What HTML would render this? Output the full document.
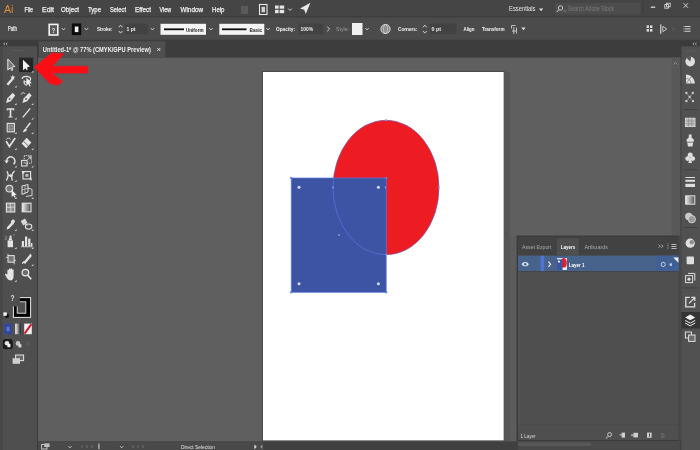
<!DOCTYPE html>
<html><head><meta charset="utf-8"><title>Illustrator</title>
<style>
*{margin:0;padding:0}
html,body{width:700px;height:450px;overflow:hidden;background:#5e5e5e}
svg{display:block;font-family:"Liberation Sans",sans-serif}
</style></head><body>
<svg width="700" height="450" viewBox="0 0 700 450">
<defs>
<filter id="b3" x="-5%" y="-5%" width="110%" height="110%"><feGaussianBlur stdDeviation="0.35"/></filter>
<filter id="b5" x="-20%" y="-20%" width="140%" height="140%"><feGaussianBlur stdDeviation="0.5"/></filter>
<filter id="b7" x="-20%" y="-20%" width="140%" height="140%"><feGaussianBlur stdDeviation="0.7"/></filter>
<clipPath id="rc"><rect x="291.2" y="178" width="95" height="114.3"/></clipPath>
<linearGradient id="gr" x1="0" x2="1" y1="0" y2="0"><stop offset="0" stop-color="#fff"/><stop offset="1" stop-color="#222"/></linearGradient>
<linearGradient id="gr2" x1="0" x2="1" y1="0" y2="0"><stop offset="0" stop-color="#f4f4f4"/><stop offset="1" stop-color="#4a4a4a"/></linearGradient>
<linearGradient id="gr3" x1="0" x2="1" y1="0" y2="0"><stop offset="0" stop-color="#e8e8e8"/><stop offset="1" stop-color="#555"/></linearGradient>
<filter id="gb" x="-20" y="-20" width="740" height="490" filterUnits="userSpaceOnUse"><feGaussianBlur stdDeviation="0.35"/></filter>
</defs>
<g filter="url(#gb)">
<rect x="-20" y="-20" width="740" height="490" fill="#5e5e5e" />
<rect x="-20" y="-20" width="740" height="37" fill="#444444" />
<rect x="-20" y="17" width="740" height="23" fill="#4c4c4c" />
<rect x="-20" y="16.3" width="740" height="1.2" fill="#3d3d3d" />
<rect x="-20" y="39.7" width="740" height="1" fill="#3a3a3a" />
<rect x="38" y="40.2" width="643" height="17.4" fill="#3c3c3c" />
<rect x="38.8" y="41.3" width="126.5" height="16.3" fill="#4f4f4f" />
<rect x="-20" y="40.2" width="57.5" height="430" fill="#4f4f4f" />
<rect x="-20" y="46.2" width="22.6" height="430" fill="#474747" />
<rect x="-20" y="40.2" width="57.5" height="6" fill="#3b3b3b" />
<rect x="37" y="40.2" width="1" height="430" fill="#3a3a3a" />
<rect x="263" y="72" width="240.7" height="368.5" fill="#ffffff" />
<rect x="262.5" y="71.5" width="241.7" height="369.5" fill="none" stroke="#3c3c3c" stroke-width="0.6"/>
<rect x="671.5" y="57.5" width="9.5" height="384" fill="#585858" />
<rect x="38" y="441" width="643" height="29" fill="#484848" />
<rect x="263" y="442" width="255" height="28" fill="#414141" />
<rect x="504" y="72" width="5.5" height="369" fill="#545454" />
<rect x="681" y="40.2" width="39" height="430" fill="#515151" />
<rect x="681" y="40.2" width="39" height="6.2" fill="#3b3b3b" />
<rect x="680.5" y="40.2" width="0.8" height="430" fill="#3a3a3a" />
<g filter="url(#b3)">
<ellipse cx="386" cy="187.5" rx="53" ry="67.3" fill="#ed1c24" stroke="#7a5aa8" stroke-width="0.7"/>
<rect x="291.2" y="178" width="95" height="114.3" fill="#3e53a4"/>
<ellipse cx="386" cy="187.5" rx="53" ry="67.3" fill="none" stroke="#5b7fe6" stroke-width="0.6" clip-path="url(#rc)"/>
<rect x="291.2" y="178" width="95" height="114.3" fill="none" stroke="#5b7be0" stroke-width="0.7"/>
<circle cx="299" cy="187.2" r="1.5" fill="#d3dbfa"/>
<circle cx="378.4" cy="187.2" r="1.5" fill="#d3dbfa"/>
<circle cx="299" cy="283.8" r="1.5" fill="#d3dbfa"/>
<circle cx="378.4" cy="283.8" r="1.5" fill="#d3dbfa"/>
<circle cx="333" cy="187.5" r="0.9" fill="#7f9cf0"/>
<circle cx="386" cy="120.2" r="0.9" fill="#7f9cf0"/>
<circle cx="439" cy="187.5" r="0.9" fill="#7f9cf0"/>
<circle cx="385.5" cy="187.5" r="0.9" fill="#7f9cf0"/>
<circle cx="339" cy="235" r="0.9" fill="#7f9cf0"/>
<circle cx="386.2" cy="254.6" r="0.9" fill="#7f9cf0"/>
<rect x="290.2" y="177" width="2" height="2" fill="#5b7be0"/>
<rect x="385.2" y="177" width="2" height="2" fill="#5b7be0"/>
<rect x="290.2" y="291.3" width="2" height="2" fill="#5b7be0"/>
<rect x="385.2" y="291.3" width="2" height="2" fill="#5b7be0"/>
</g>
<g filter="url(#b3)">
<text x="4" y="13.2" textLength="9.4" lengthAdjust="spacingAndGlyphs" font-size="11" fill="#dc8c3a" font-weight="normal" >Ai</text>
<text x="24.5" y="12.3" textLength="8.5" lengthAdjust="spacingAndGlyphs" font-size="7.6" fill="#f2f2f2" font-weight="normal" stroke="#f2f2f2" stroke-width="0.25">File</text>
<text x="42" y="12.3" textLength="12" lengthAdjust="spacingAndGlyphs" font-size="7.6" fill="#f2f2f2" font-weight="normal" stroke="#f2f2f2" stroke-width="0.25">Edit</text>
<text x="61" y="12.3" textLength="18" lengthAdjust="spacingAndGlyphs" font-size="7.6" fill="#f2f2f2" font-weight="normal" stroke="#f2f2f2" stroke-width="0.25">Object</text>
<text x="88" y="12.3" textLength="13" lengthAdjust="spacingAndGlyphs" font-size="7.6" fill="#f2f2f2" font-weight="normal" stroke="#f2f2f2" stroke-width="0.25">Type</text>
<text x="110" y="12.3" textLength="16" lengthAdjust="spacingAndGlyphs" font-size="7.6" fill="#f2f2f2" font-weight="normal" stroke="#f2f2f2" stroke-width="0.25">Select</text>
<text x="135" y="12.3" textLength="16" lengthAdjust="spacingAndGlyphs" font-size="7.6" fill="#f2f2f2" font-weight="normal" stroke="#f2f2f2" stroke-width="0.25">Effect</text>
<text x="159.5" y="12.3" textLength="11.5" lengthAdjust="spacingAndGlyphs" font-size="7.6" fill="#f2f2f2" font-weight="normal" stroke="#f2f2f2" stroke-width="0.25">View</text>
<text x="180.5" y="12.3" textLength="22.5" lengthAdjust="spacingAndGlyphs" font-size="7.6" fill="#f2f2f2" font-weight="normal" stroke="#f2f2f2" stroke-width="0.25">Window</text>
<text x="212" y="12.3" textLength="12.5" lengthAdjust="spacingAndGlyphs" font-size="7.6" fill="#f2f2f2" font-weight="normal" stroke="#f2f2f2" stroke-width="0.25">Help</text>
<rect x="241" y="6" width="7" height="8" fill="#5a5a5a" />
<rect x="259.5" y="4.5" width="7.5" height="10" fill="none" stroke="#e6e6e6" stroke-width="1.1"/>
<rect x="261.5" y="6.8" width="3.5" height="5.4" fill="#cfcfcf" />
<rect x="275" y="5.5" width="3.6" height="3.2" fill="#e6e6e6" />
<rect x="279.6" y="5.5" width="4.6" height="3.2" fill="#e6e6e6" />
<rect x="275" y="9.8" width="3.6" height="3.4" fill="#e6e6e6" />
<rect x="279.6" y="9.8" width="4.6" height="3.4" fill="#e6e6e6" />
<path d="M288.2 8.51 L290 10.49 L291.8 8.51" fill="none" stroke="#d8d8d8" stroke-width="0.9"/>
<path d="M310.4 2.8 L300 8.6 L304.2 9.8 L305.8 14 Z" fill="#e6e6e6" stroke="none" stroke-width="0" />
<text x="509" y="11.2" textLength="26.5" lengthAdjust="spacingAndGlyphs" font-size="7.4" fill="#e6e6e6" font-weight="normal" >Essentials</text>
<path d="M539 8.6 H543.2 L541.1 11.2 Z" fill="#dcdcdc" stroke="none" stroke-width="0" />
<rect x="555" y="3" width="85.7" height="11.3" fill="#4e4e4e" />
<rect x="642.6" y="0" width="0.8" height="14.2" fill="#3a3a3a" />
<circle cx="560.5" cy="8" r="2.2" fill="none" stroke="#d0d0d0" stroke-width="0.9"/>
<path d="M558.8 9.8 L556.8 12" stroke="#d0d0d0" stroke-width="1" fill="none"/>
<path d="M564.1 10.505 L565 11.495 L565.9 10.505" fill="none" stroke="#bdbdbd" stroke-width="0.6"/>
<text x="568" y="11.4" textLength="46" lengthAdjust="spacingAndGlyphs" font-size="6.4" fill="#7a7a7a" font-weight="normal" >Search Adobe Stock</text>
<rect x="650.8" y="6.6" width="4.4" height="1.2" fill="#e0e0e0" />
<rect x="664.8" y="4.6" width="3.8" height="3.6" fill="none" stroke="#e0e0e0" stroke-width="0.8"/>
<rect x="666.4" y="3.2" width="3.8" height="3.6" fill="none" stroke="#e0e0e0" stroke-width="0.8"/>
<path d="M683.6 3.2 L688 7.8 M688 3.2 L683.6 7.8" stroke="#e0e0e0" stroke-width="0.9" fill="none"/>
</g>
<g filter="url(#b3)">
<text x="7.8" y="31.2" textLength="9.2" lengthAdjust="spacingAndGlyphs" font-size="6.4" fill="#ececec" font-weight="normal" stroke="#ececec" stroke-width="0.2">Path</text>
<rect x="49.2" y="24.4" width="8.6" height="10.6" fill="#5a5a5a" stroke="#f4f4f4" stroke-width="1.6"/>
<text x="51.8" y="32.6" textLength="3.4" lengthAdjust="spacingAndGlyphs" font-size="7" fill="#e8e8e8" font-weight="bold" >?</text>
<path d="M61.8 28.065 L63.5 29.935 L65.2 28.065" fill="none" stroke="#d8d8d8" stroke-width="0.9"/>
<rect x="71.8" y="23.5" width="9.4" height="11.6" fill="#0a0a0a" />
<rect x="74.8" y="26.5" width="3.6" height="5.6" fill="#f2f2f2" />
<path d="M84.8 28.065 L86.5 29.935 L88.2 28.065" fill="none" stroke="#d8d8d8" stroke-width="0.9"/>
<text x="97" y="31.2" textLength="15.5" lengthAdjust="spacingAndGlyphs" font-size="6" fill="#f4f4f4" font-weight="bold" >Stroke:</text>
<path d="M118.8 27.3 L120.6 25.2 L122.4 27.3 M118.8 31 L120.6 33.1 L122.4 31" fill="none" stroke="#dcdcdc" stroke-width="0.9"/>
<rect x="125" y="23.5" width="23" height="11" fill="#424242" />
<text x="126.5" y="31.2" textLength="9" lengthAdjust="spacingAndGlyphs" font-size="6.2" fill="#f0f0f0" font-weight="bold" >1 pt</text>
<path d="M150.8 28.065 L152.5 29.935 L154.2 28.065" fill="none" stroke="#d8d8d8" stroke-width="0.9"/>
<rect x="160.5" y="23.8" width="45.5" height="11" fill="#f4f4f4" />
<rect x="164" y="28.4" width="20" height="1.8" fill="#111" />
<text x="186" y="31.6" textLength="17.5" lengthAdjust="spacingAndGlyphs" font-size="6" fill="#222" font-weight="bold" >Uniform</text>
<path d="M209.3 28.065 L211 29.935 L212.7 28.065" fill="none" stroke="#d8d8d8" stroke-width="0.9"/>
<rect x="219.3" y="23.8" width="45" height="11" fill="#f4f4f4" />
<rect x="222" y="28.4" width="24.5" height="1.8" fill="#111" />
<text x="249.6" y="31.6" textLength="12.5" lengthAdjust="spacingAndGlyphs" font-size="6" fill="#222" font-weight="bold" >Basic</text>
<path d="M266.3 28.065 L268 29.935 L269.7 28.065" fill="none" stroke="#d8d8d8" stroke-width="0.9"/>
<text x="276" y="31.2" textLength="19" lengthAdjust="spacingAndGlyphs" font-size="6" fill="#f4f4f4" font-weight="bold" >Opacity:</text>
<rect x="298.5" y="23.5" width="25" height="11" fill="#424242" />
<text x="300.5" y="31.2" textLength="12.5" lengthAdjust="spacingAndGlyphs" font-size="6.2" fill="#f0f0f0" font-weight="bold" >100%</text>
<path d="M327.2 26.6 L329.6 29 L327.2 31.4" fill="none" stroke="#dcdcdc" stroke-width="0.9"/>
<text x="336" y="31.2" textLength="13" lengthAdjust="spacingAndGlyphs" font-size="6" fill="#9a9a9a" font-weight="normal" >Style:</text>
<rect x="352" y="23" width="10.5" height="12" fill="#f0f0f0" />
<path d="M365.3 28.065 L367 29.935 L368.7 28.065" fill="none" stroke="#d8d8d8" stroke-width="0.9"/>
<circle cx="385.5" cy="29" r="4.6" fill="#8a8a8a" stroke="#d6d6d6" stroke-width="1"/>
<ellipse cx="385.5" cy="29" rx="2" ry="4.4" fill="none" stroke="#d6d6d6" stroke-width="0.7"/>
<text x="398" y="31.2" textLength="19.5" lengthAdjust="spacingAndGlyphs" font-size="6" fill="#f4f4f4" font-weight="bold" >Corners:</text>
<path d="M423 27.3 L424.8 25.2 L426.6 27.3 M423 31 L424.8 33.1 L426.6 31" fill="none" stroke="#dcdcdc" stroke-width="0.9"/>
<rect x="429.5" y="23.5" width="27" height="11" fill="#424242" />
<text x="431.5" y="31.2" textLength="9.5" lengthAdjust="spacingAndGlyphs" font-size="6.2" fill="#f0f0f0" font-weight="bold" >0 pt</text>
<text x="463.5" y="31.2" textLength="11" lengthAdjust="spacingAndGlyphs" font-size="6" fill="#f6f6f6" font-weight="bold" >Align</text>
<text x="482" y="31.2" textLength="22.5" lengthAdjust="spacingAndGlyphs" font-size="6" fill="#f6f6f6" font-weight="bold" >Transform</text>
<path d="M511.5 25.5 h4 M511.5 25.5 v3 M513.8 27 v7 M512 31 h4.5 M516.5 27.5 v6" fill="none" stroke="#dcdcdc" stroke-width="0.8"/>
<path d="M521.4 27.6 H525.6 L523.5 30.2 Z" fill="#e0e0e0" stroke="none" stroke-width="0" />
<rect x="646.6" y="25.4" width="2.4" height="2.6" fill="#dcdcdc" />
<rect x="646.6" y="29.0" width="2.4" height="2.6" fill="#dcdcdc" />
<rect x="650.0" y="25.4" width="2.4" height="2.6" fill="#dcdcdc" />
<rect x="650.0" y="29.0" width="2.4" height="2.6" fill="#dcdcdc" />
<rect x="660.2" y="24.4" width="1.1" height="9.4" fill="#dcdcdc" />
<path d="M662.8 26.3 L666.8 29 L662.8 31.7 Z" fill="none" stroke="#dcdcdc" stroke-width="0.8"/>
<path d="M672.3000000000001 28.285 L673.6 29.715 L674.9 28.285" fill="none" stroke="#777" stroke-width="0.7"/>
<rect x="685" y="26.0" width="5.5" height="1" fill="#cfcfcf" />
<rect x="683.6" y="26.0" width="0.9" height="1" fill="#cfcfcf" />
<rect x="685" y="28.4" width="5.5" height="1" fill="#cfcfcf" />
<rect x="683.6" y="28.4" width="0.9" height="1" fill="#cfcfcf" />
<rect x="685" y="30.8" width="5.5" height="1" fill="#cfcfcf" />
<rect x="683.6" y="30.8" width="0.9" height="1" fill="#cfcfcf" />
</g>
<g filter="url(#b3)">
<text x="42.8" y="52.2" textLength="108" lengthAdjust="spacingAndGlyphs" font-size="6.6" fill="#f0f0f0" font-weight="bold" >Untitled-1* @ 77% (CMYK/GPU Preview)</text>
<path d="M157.3 48 L160.3 51 M160.3 48 L157.3 51" stroke="#e6e6e6" stroke-width="0.9" fill="none"/>
</g>
<g filter="url(#b5)">
<path d="M5 42.6 L3.6 43.8 L5 45 M7.4 42.6 L6 43.8 L7.4 45" fill="none" stroke="#cfcfcf" stroke-width="0.7"/>
<rect x="12.0" y="50.2" width="0.9" height="0.9" fill="#6a6a6a" />
<rect x="13.9" y="50.2" width="0.9" height="0.9" fill="#6a6a6a" />
<rect x="15.8" y="50.2" width="0.9" height="0.9" fill="#6a6a6a" />
<rect x="17.7" y="50.2" width="0.9" height="0.9" fill="#6a6a6a" />
<rect x="19.6" y="50.2" width="0.9" height="0.9" fill="#6a6a6a" />
<rect x="21.5" y="50.2" width="0.9" height="0.9" fill="#6a6a6a" />
<rect x="23.4" y="50.2" width="0.9" height="0.9" fill="#6a6a6a" />
<rect x="19" y="57.6" width="14.2" height="14.4" fill="#262626" />
<path d="M7.8 59 L7.8 70 L10.4 67.8 L11.6 70.4 L12.9 69.8 L11.8 67.2 L14.8 66.4 Z" fill="#777" stroke="#e4e4e4" stroke-width="1" />
<path d="M23 59.8 L23 70.2 L25.6 68.2 L26.6 70.2 L27.8 69.6 L26.9 67.6 L29.9 66.6 Z" fill="#f4f4f4" stroke="none" stroke-width="0" />
<path d="M33.4 70.4 L33.4 72.4 L31.4 72.4 Z" fill="#d8d8d8" stroke="none" stroke-width="0" />
<path d="M7.4 84.8 L12.4 79" fill="none" stroke="#e4e4e4" stroke-width="2.3" />
<path d="M12.8 74.8 l0.7 1.7 l1.8 0.3 l-1.4 1.2 l0.4 1.9 l-1.5 -1 l-1.7 0.8 l0.6 -1.8 l-1.3 -1.4 l1.9 0 Z" fill="#e4e4e4" stroke="none" stroke-width="0" />
<path d="M22.2 79 C22.2 75.6 30.6 75.4 30.6 79 C30.6 82 25.4 82.6 24.2 81 C23.6 83 25 84.6 26.6 85.4" fill="none" stroke="#e4e4e4" stroke-width="1.2" />
<path d="M26.4 77.6 L26.4 85.6 L28.3 83.9 L29.5 86.4 L30.6 85.9 L29.4 83.4 L31.8 83.2 Z" fill="#f0f0f0" stroke="none" stroke-width="0" />
<path d="M16.6 85.4 L16.6 87.4 L14.600000000000001 87.4 Z" fill="#d8d8d8" stroke="none" stroke-width="0" />
<path d="M12.799999999999999 92.8 L15.2 95.4 L10.799999999999999 101.2 L5.999999999999999 103 L7.3999999999999995 98.2 Z" fill="#e4e4e4" stroke="none" stroke-width="0" />
<circle cx="9.6" cy="99" r="0.9" fill="#4f4f4f"/>
<path d="M29.200000000000003 92.8 L31.6 95.4 L27.200000000000003 101.2 L22.400000000000002 103 L23.8 98.2 Z" fill="#e4e4e4" stroke="none" stroke-width="0" />
<circle cx="26.0" cy="99" r="0.9" fill="#4f4f4f"/>
<path d="M21 94.6 C22 92.2 24 92.2 25 94" fill="none" stroke="#e4e4e4" stroke-width="0.9" />
<path d="M16.6 103 L16.6 105 L14.600000000000001 105 Z" fill="#d8d8d8" stroke="none" stroke-width="0" />
<path d="M33.4 103 L33.4 105 L31.4 105 Z" fill="#d8d8d8" stroke="none" stroke-width="0" />
<path d="M6.8 108.2 H14.2 V110.6 H13.2 V109.7 H11.3 V116.4 H12.5 V117.6 H8.5 V116.4 H9.7 V109.7 H7.8 V110.6 H6.8 Z" fill="#e4e4e4" stroke="none" stroke-width="0" />
<path d="M22.8 117.4 L30.2 108.4" fill="none" stroke="#e4e4e4" stroke-width="1.3" />
<path d="M16.6 117.6 L16.6 119.6 L14.600000000000001 119.6 Z" fill="#d8d8d8" stroke="none" stroke-width="0" />
<path d="M33.4 117.6 L33.4 119.6 L31.4 119.6 Z" fill="#d8d8d8" stroke="none" stroke-width="0" />
<rect x="7.2" y="123.4" width="7.2" height="8.4" fill="#6a6a6a" stroke="#e4e4e4" stroke-width="1.1"/>
<path d="M9.6 123.4 V131.8 M12 123.4 V131.8 M7.2 126.2 H14.4 M7.2 129 H14.4" fill="none" stroke="#bcbcbc" stroke-width="0.5" />
<path d="M30.4 122.8 L26 128.4" fill="none" stroke="#e4e4e4" stroke-width="1.5" />
<path d="M25.6 128.2 C24.4 128.8 23.6 130.6 22.6 132.2 C24.6 132.2 26.6 131.4 27 129.6 Z" fill="#e4e4e4" stroke="none" stroke-width="0" />
<path d="M16.6 132 L16.6 134 L14.600000000000001 134 Z" fill="#d8d8d8" stroke="none" stroke-width="0" />
<path d="M33.4 132 L33.4 134 L31.4 134 Z" fill="#d8d8d8" stroke="none" stroke-width="0" />
<path d="M6.2 141.2 L9.4 146.4 L15.2 138" fill="none" stroke="#e4e4e4" stroke-width="1.7" />
<path d="M6.2 139.6 C7.4 137.6 10 137.8 10.6 139.6" fill="none" stroke="#e4e4e4" stroke-width="0.9" />
<path d="M26.6 137.8 L31.4 142.4 L26.2 148.2 L21.6 143.6 Z" fill="#e4e4e4" stroke="none" stroke-width="0" />
<path d="M23.6 141.4 L28.4 146" fill="none" stroke="#555" stroke-width="0.8" />
<path d="M16.6 148 L16.6 150 L14.600000000000001 150 Z" fill="#d8d8d8" stroke="none" stroke-width="0" />
<path d="M33.4 148 L33.4 150 L31.4 150 Z" fill="#d8d8d8" stroke="none" stroke-width="0" />
<path d="M6.6 161.6 A4.2 4.3 0 1 1 13.6 164.3" fill="none" stroke="#e4e4e4" stroke-width="1.5" />
<path d="M4.4 160.4 L8.8 160.4 L6.6 163.6 Z" fill="#e4e4e4" stroke="none" stroke-width="0" />
<rect x="21.6" y="160.4" width="5.4" height="5.6" fill="none" stroke="#e4e4e4" stroke-width="1"/>
<rect x="24.2" y="155.6" width="7.2" height="7.6" fill="none" stroke="#e4e4e4" stroke-width="0.9" stroke-dasharray="1.2 0.8"/>
<path d="M27.4 160 L30.4 157 M28.2 156.8 H30.6 V159.2" fill="none" stroke="#e4e4e4" stroke-width="0.8" />
<path d="M16.6 165.6 L16.6 167.6 L14.600000000000001 167.6 Z" fill="#d8d8d8" stroke="none" stroke-width="0" />
<path d="M33.4 165.6 L33.4 167.6 L31.4 167.6 Z" fill="#d8d8d8" stroke="none" stroke-width="0" />
<path d="M6.4 180.4 C8.6 176 8.6 174.6 7 171.2 M14.6 171 C11.2 173.6 11 176.4 12.4 180.6" fill="none" stroke="#e4e4e4" stroke-width="1.3" />
<path d="M8.4 175.6 H12.6" fill="none" stroke="#e4e4e4" stroke-width="1" />
<circle cx="10.4" cy="175.6" r="1.3" fill="#e4e4e4"/>
<rect x="23" y="171.6" width="7.6" height="7.4" fill="none" stroke="#e4e4e4" stroke-width="1.1"/>
<path d="M21.6 170.4 L25 173 L22.2 173.8 Z M31.8 181 L28.8 178 L31.4 177.6 Z" fill="#e4e4e4" stroke="none" stroke-width="0" />
<rect x="25.4" y="174" width="3" height="2.8" fill="#bdbdbd" />
<path d="M16.6 180 L16.6 182 L14.600000000000001 182 Z" fill="#d8d8d8" stroke="none" stroke-width="0" />
<circle cx="9.4" cy="188.6" r="3.4" fill="#777" stroke="#e4e4e4" stroke-width="1.1"/>
<path d="M11.6 190 L11.6 197 L13.4 195.4 L14.6 197.8 L15.7 197.2 L14.5 194.9 L16.6 194.7 Z" fill="#f2f2f2" stroke="none" stroke-width="0" />
<path d="M22 186 L28 184.6 L28 192 L22 194.4 Z" fill="none" stroke="#e4e4e4" stroke-width="1" />
<path d="M28 188 L32 189.4 L32 195.6 L26 196.4" fill="none" stroke="#e4e4e4" stroke-width="0.9" />
<path d="M22 190 L28 188.2 M25 185.4 V193.2" fill="none" stroke="#e4e4e4" stroke-width="0.6" />
<path d="M16.6 197 L16.6 199 L14.600000000000001 199 Z" fill="#d8d8d8" stroke="none" stroke-width="0" />
<path d="M33.4 197 L33.4 199 L31.4 199 Z" fill="#d8d8d8" stroke="none" stroke-width="0" />
<rect x="6.4" y="203.2" width="8.4" height="8.8" fill="#8b8b8b" stroke="#e4e4e4" stroke-width="1.1"/>
<path d="M6.4 207 C9 208.4 12 206 14.8 207.4 M10.4 203.2 C9.4 206 11.8 209 10.6 212" fill="none" stroke="#f0f0f0" stroke-width="0.7" />
<rect x="22.2" y="203.2" width="8.8" height="8.6" fill="url(#gr2)" stroke="#e4e4e4" stroke-width="1.1"/>
<path d="M6.6 229.4 L7.2 227 L11.6 222.2 L13.4 224 L9 228.8 Z" fill="#e4e4e4" stroke="none" stroke-width="0" />
<path d="M11.4 220.8 C12.6 218.4 15.4 219.4 14.8 221.8 L13.2 224.4 L10.8 222.2 Z" fill="#e4e4e4" stroke="none" stroke-width="0" />
<rect x="21.6" y="219.6" width="5" height="5" fill="#d8d8d8" transform="rotate(-30 24 222)"/>
<ellipse cx="28.6" cy="226.6" rx="3.2" ry="2.6" fill="none" stroke="#e4e4e4" stroke-width="1.1"/>
<path d="M25.4 224 L27.4 225.4" fill="none" stroke="#e4e4e4" stroke-width="0.8" />
<path d="M16.6 229 L16.6 231 L14.600000000000001 231 Z" fill="#d8d8d8" stroke="none" stroke-width="0" />
<path d="M33.4 229 L33.4 231 L31.4 231 Z" fill="#d8d8d8" stroke="none" stroke-width="0" />
<path d="M7.6 240.4 H13 V247.2 H7.6 Z" fill="#e4e4e4" stroke="none" stroke-width="0" />
<path d="M8.6 240.2 L9.4 237.6 H11.4 L12.2 240.2 Z" fill="#e4e4e4" stroke="none" stroke-width="0" />
<rect x="9.6" y="235.6" width="2" height="2" fill="#e4e4e4" />
<path d="M5.6 236.2 L6.8 237.4 M5 239 H6.6 M13.4 235.4 L14.4 234.4" fill="none" stroke="#e4e4e4" stroke-width="0.7" />
<rect x="21.8" y="241" width="2.2" height="5.4" fill="#e4e4e4" />
<rect x="25" y="236.6" width="2.2" height="9.8" fill="#e4e4e4" />
<rect x="28.2" y="238.6" width="2.2" height="7.8" fill="#e4e4e4" />
<rect x="31" y="243" width="1.4" height="3.4" fill="#e4e4e4" />
<rect x="21" y="246.4" width="11.6" height="0.8" fill="#e4e4e4" />
<path d="M16.6 247 L16.6 249 L14.600000000000001 249 Z" fill="#d8d8d8" stroke="none" stroke-width="0" />
<path d="M33.4 247 L33.4 249 L31.4 249 Z" fill="#d8d8d8" stroke="none" stroke-width="0" />
<rect x="8" y="255.6" width="6.2" height="6.6" fill="#777" stroke="#e4e4e4" stroke-width="1"/>
<path d="M6 257.4 H8 M8 253.8 V255.6 M14.2 262.2 V264.4 M14.2 260.4 H16" fill="none" stroke="#e4e4e4" stroke-width="0.8" />
<path d="M30.6 253.4 L23.4 262.6 L25 264 L31.8 256 Z" fill="#e4e4e4" stroke="none" stroke-width="0" />
<path d="M22.2 263.6 L24.6 261.2" fill="none" stroke="#e4e4e4" stroke-width="1.4" />
<path d="M33.4 264 L33.4 266 L31.4 266 Z" fill="#d8d8d8" stroke="none" stroke-width="0" />
<path d="M7.4 274.4 V270.6 C7.4 269.6 8.8 269.6 8.8 270.6 V269.4 C8.8 268.2 10.4 268.2 10.4 269.4 V269 C10.4 267.9 12 267.9 12 269 V270 C12 269 13.6 269 13.6 270 V276 C13.6 279 12.4 280.4 10.4 280.4 C8.4 280.4 7.6 279.4 6.6 277.6 L5.2 275 C4.8 274 6 273.4 6.6 274.2 Z" fill="#e4e4e4" stroke="none" stroke-width="0" />
<circle cx="25.4" cy="272.6" r="3.3" fill="#6c6c6c" stroke="#e4e4e4" stroke-width="1.3"/>
<path d="M27.8 275.2 L31.2 279.2" fill="none" stroke="#e4e4e4" stroke-width="1.7" />
<path d="M16.6 280 L16.6 282 L14.600000000000001 282 Z" fill="#d8d8d8" stroke="none" stroke-width="0" />
<text x="10.4" y="300.6" textLength="4" lengthAdjust="spacingAndGlyphs" font-size="9.5" fill="#dcdcdc" font-weight="bold" >?</text>
<path d="M24.4 292.6 C26.6 290 29.4 290.6 30 293.6" fill="none" stroke="#5c5c5c" stroke-width="0.9" />
<rect x="13.4" y="297.6" width="17.2" height="19.8" fill="#050505" stroke="#e8e8e8" stroke-width="1"/>
<rect x="17.2" y="301.8" width="8.6" height="11.4" fill="#4f4f4f" stroke="#e0e0e0" stroke-width="0.9"/>
<rect x="4.4" y="290.8" width="15.4" height="15.6" fill="#4f4f4f" />
<text x="10.4" y="300.6" textLength="4" lengthAdjust="spacingAndGlyphs" font-size="9.5" fill="#dcdcdc" font-weight="bold" >?</text>
<rect x="5.2" y="314.2" width="3.6" height="3.6" fill="#111" />
<rect x="3.4" y="312.4" width="3.4" height="3.4" fill="#f4f4f4" />
<rect x="4.6" y="323.6" width="7" height="10.6" fill="#2f47a6" />
<rect x="6.6" y="326.8" width="3" height="4.4" fill="#5b74cf" />
<rect x="15.2" y="323.6" width="5.6" height="10.6" fill="url(#gr)" />
<rect x="24.2" y="323.6" width="7.6" height="10.6" fill="#f2f2f2" />
<path d="M24.6 333.6 L31.4 324.2" fill="none" stroke="#d8152a" stroke-width="2" />
<rect x="2.8" y="339" width="10" height="10.2" fill="#1d1d1d" rx="2.6"/>
<circle cx="7" cy="343.2" r="2.3" fill="#e4e4e4"/>
<rect x="7.4" y="344" width="3" height="3.2" fill="#f4f4f4" />
<circle cx="18" cy="343.4" r="2.3" fill="#c4c4c4"/>
<rect x="18.4" y="344.2" width="3" height="3.2" fill="#d8d8d8" />
<rect x="25.6" y="341.6" width="4" height="4.6" fill="#595959" />
<rect x="15.6" y="355" width="8" height="5.6" fill="#6a6a6a" stroke="#e4e4e4" stroke-width="1"/>
<rect x="12.6" y="358.2" width="7.4" height="5.6" fill="#cfcfcf" />
</g>
<rect x="510" y="236" width="7.4" height="205" fill="#5c5c5c" />
<rect x="516.6" y="235.6" width="163" height="205.4" fill="#3a3a3a" />
<rect x="518" y="237" width="160.8" height="203" fill="#4f4f4f" />
<rect x="518" y="442.4" width="73" height="3.6" fill="#585858" />
<rect x="591" y="442.4" width="88" height="3.6" fill="#4b4b4b" />
<rect x="518.6" y="272" width="0.6" height="153" fill="#5a5a5a" />
<rect x="518" y="424.6" width="160.8" height="0.6" fill="#4a4a4a" />
<rect x="518" y="237" width="160.8" height="18.6" fill="#434343" />
<rect x="557" y="238.4" width="21.8" height="17.4" fill="#4f4f4f" />
<rect x="518" y="255.7" width="160.8" height="15.6" fill="#46638c" />
<rect x="540.6" y="255.7" width="3.6" height="15.6" fill="#4f73cf" />
<rect x="656.5" y="255.7" width="22.3" height="15.6" fill="#415f92" />
<rect x="518" y="271.3" width="160.8" height="0.7" fill="#3f3f3f" />
<g filter="url(#b3)">
<text x="522" y="248.8" textLength="29.5" lengthAdjust="spacingAndGlyphs" font-size="6.2" fill="#a8a8a8" font-weight="normal" >Asset Export</text>
<text x="560.8" y="248.8" textLength="14.4" lengthAdjust="spacingAndGlyphs" font-size="6.2" fill="#ffffff" font-weight="bold" >Layers</text>
<text x="584.4" y="248.8" textLength="23.6" lengthAdjust="spacingAndGlyphs" font-size="6.2" fill="#a8a8a8" font-weight="normal" >Artboards</text>
<path d="M658.6 244.6 L660.2 246.2 L658.6 247.8 M661.4 244.6 L663 246.2 L661.4 247.8" fill="none" stroke="#cfcfcf" stroke-width="0.7"/>
<rect x="667.6" y="243.2" width="0.7" height="6" fill="#8a8a8a" />
<rect x="671.4" y="244" width="5" height="0.9" fill="#c8c8c8" />
<rect x="671.4" y="246" width="5" height="0.9" fill="#c8c8c8" />
<rect x="671.4" y="248" width="5" height="0.9" fill="#c8c8c8" />
<path d="M521.6 264.2 C523.4 261.4 527 261.4 528.8 264.2 C527 267 523.4 267 521.6 264.2 Z" fill="#e6ecf6"/>
<circle cx="525.2" cy="264.2" r="1.3" fill="#46638c"/>
<path d="M548.4 261.6 L550.6 264.2 L548.4 266.8" fill="none" stroke="#f0f0f0" stroke-width="1.1"/>
<rect x="557" y="258" width="10" height="12" fill="#dfe3f2" />
<ellipse cx="563.8" cy="263" rx="3" ry="5" fill="#ed1c24"/>
<rect x="557" y="259.4" width="5.6" height="10.6" fill="#3e53a4" />
<circle cx="559" cy="261.6" r="1.1" fill="#fff"/><circle cx="563.9" cy="268.6" r="1.1" fill="#fff"/>
<text x="568.8" y="266.6" textLength="15.6" lengthAdjust="spacingAndGlyphs" font-size="6.2" fill="#ffffff" font-weight="bold" >Layer 1</text>
<circle cx="663.2" cy="264.4" r="2.1" fill="none" stroke="#dfe6f2" stroke-width="0.8"/>
<rect x="669.6" y="263.4" width="2.4" height="2.4" fill="#bcd0ff" />
<path d="M673.2 257.4 L678.4 257.4 L678.4 262.8 Z" fill="#f4f4f4"/>
<text x="520.6" y="438" textLength="15" lengthAdjust="spacingAndGlyphs" font-size="5.8" fill="#d8d8d8" font-weight="normal" >1 Layer</text>
<circle cx="609.6" cy="434.6" r="2" fill="none" stroke="#d6d6d6" stroke-width="0.9"/><path d="M608 436.4 L606 438.6" stroke="#d6d6d6" stroke-width="1" fill="none"/>
<rect x="621.6" y="432.6" width="3.4" height="5" fill="#cfcfcf" />
<rect x="619.6" y="434.4" width="2" height="1" fill="#cfcfcf" />
<rect x="633.4" y="432.8" width="4.6" height="4.6" fill="#cfcfcf" />
<rect x="631" y="434.6" width="2.4" height="1.2" fill="#cfcfcf" />
<rect x="647" y="432.6" width="4.6" height="5.2" fill="#cfcfcf" />
<rect x="649" y="433.6" width="1" height="3.2" fill="#4d4d4d" />
<rect x="660.6" y="433" width="4" height="5" fill="#5e5e5e" />
</g>
<g filter="url(#b5)">
<path d="M694.2 42.6 L692.8 43.8 L694.2 45 M696.6 42.6 L695.2 43.8 L696.6 45" fill="none" stroke="#cfcfcf" stroke-width="0.7"/>
<rect x="685.6" y="50.4" width="0.9" height="0.9" fill="#686868" />
<rect x="687.5" y="50.4" width="0.9" height="0.9" fill="#686868" />
<rect x="689.4" y="50.4" width="0.9" height="0.9" fill="#686868" />
<rect x="691.3000000000001" y="50.4" width="0.9" height="0.9" fill="#686868" />
<rect x="693.2" y="50.4" width="0.9" height="0.9" fill="#686868" />
<rect x="695.1" y="50.4" width="0.9" height="0.9" fill="#686868" />
<path d="M673.4 64.6 L675.4 62.2 L677.4 64.6" fill="none" stroke="#9a9a9a" stroke-width="0.8"/>
<circle cx="690.2" cy="61.6" r="4.8" fill="#dedede"/>
<path d="M690.2 61.6 L686.8000000000001 58.2 A4.8 4.8 0 0 1 691.2 56.9 Z" fill="#555"/>
<path d="M686.0 74.4 L686.0 83.6 L694.8000000000001 83.6 C694.8000000000001 78.6 690.8000000000001 74.4 686.0 74.4 Z" fill="#dedede" stroke="none" stroke-width="0" />
<path d="M686.0 78.4 C689.2 78.6 690.8000000000001 80.4 691.0 83.6 M686.0 83.6 L691.8000000000001 76.2" fill="none" stroke="#6a6a6a" stroke-width="0.6" />
<circle cx="686.4" cy="93" r="1.15" fill="#cfcfcf"/>
<circle cx="692.8000000000001" cy="93" r="1.15" fill="#cfcfcf"/>
<circle cx="686.4" cy="101.2" r="1.15" fill="#cfcfcf"/>
<circle cx="693.0" cy="101.2" r="1.15" fill="#cfcfcf"/>
<circle cx="689.6" cy="97" r="1.15" fill="#cfcfcf"/>
<path d="M686.4000000000001 93 L693.0 101.2 M692.8000000000001 93 L686.4000000000001 101.2" fill="none" stroke="#bdbdbd" stroke-width="0.5" />
<rect x="683.6" y="109" width="13.6" height="0.7" fill="#3a3a3a" />
<rect x="685.4000000000001" y="118.2" width="9.6" height="8.4" fill="#bdbdbd" stroke="#dedede" stroke-width="0.9"/>
<path d="M685.4000000000001 121 H695.0 M688.6 118.2 V126.6 M691.8000000000001 118.2 V126.6 M685.4000000000001 123.8 H695.0" fill="none" stroke="#7a7a7a" stroke-width="0.5" />
<path d="M688.8000000000001 134.6 H691.6 V137.6 L693.8000000000001 139.4 V141.8 H686.6 V139.4 L688.8000000000001 137.6 Z" fill="#dedede" stroke="none" stroke-width="0" />
<path d="M687.2 142.6 H693.2 L692.4000000000001 146.4 H688.0 Z" fill="#dedede" stroke="none" stroke-width="0" />
<circle cx="690.2" cy="155" r="2.5" fill="#dedede"/><circle cx="687.7" cy="158.6" r="2.4" fill="#dedede"/><circle cx="692.7" cy="158.6" r="2.4" fill="#dedede"/>
<path d="M689.6 158 L688.4000000000001 163 H692.0 L690.8000000000001 158 Z" fill="#dedede" stroke="none" stroke-width="0" />
<rect x="683.6" y="169.4" width="13.6" height="0.7" fill="#3a3a3a" />
<rect x="685.4000000000001" y="177" width="9.6" height="1" fill="#dedede" />
<rect x="685.4000000000001" y="179.8" width="9.6" height="2" fill="#dedede" />
<rect x="685.4000000000001" y="183.8" width="9.6" height="3.2" fill="#dedede" />
<rect x="685.6" y="195.8" width="9.2" height="8.4" fill="url(#gr3)" stroke="#dedede" stroke-width="1"/>
<circle cx="688.8000000000001" cy="216.4" r="3.7" fill="#c8c8c8"/><circle cx="691.8000000000001" cy="219.2" r="3.7" fill="#9a9a9a" stroke="#dedede" stroke-width="0.8"/>
<rect x="683.6" y="227" width="13.6" height="0.7" fill="#3a3a3a" />
<circle cx="690.2" cy="243.2" r="4.6" fill="#dedede"/>
<circle cx="691.8000000000001" cy="242.2" r="2.2" fill="#8d8d8d"/>
<rect x="686.6" y="256.6" width="7.4" height="7.6" fill="#dedede" rx="1"/>
<rect x="685.6" y="275.6" width="7" height="7" fill="none" stroke="#dedede" stroke-width="1"/>
<path d="M688.0 273.4 H694.8000000000001 V280.6" fill="none" stroke="#dedede" stroke-width="1" />
<circle cx="689.0" cy="279.2" r="1.6" fill="#dedede"/>
<rect x="683.6" y="287.6" width="13.6" height="0.7" fill="#3a3a3a" />
<path d="M689.8000000000001 297.4 H685.8000000000001 V306.8 H694.6 V302.8" fill="none" stroke="#dedede" stroke-width="1.3" />
<path d="M689.0 303.4 L694.4000000000001 298 M691.2 297.4 H694.8000000000001 V301" fill="none" stroke="#dedede" stroke-width="1.2" />
<rect x="681.4" y="312" width="18.6" height="16.6" fill="#363636" />
<path d="M690.2 314.6 L695.2 317.4 L690.2 320.2 L685.2 317.4 Z" fill="#f0f0f0" stroke="none" stroke-width="0" />
<path d="M685.2 320.4 L690.2 323.2 L695.2 320.4 M685.2 323 L690.2 325.8 L695.2 323" fill="none" stroke="#f0f0f0" stroke-width="1" />
<rect x="685.4000000000001" y="332" width="6" height="6" fill="none" stroke="#dedede" stroke-width="1"/>
<rect x="688.6" y="335" width="6.4" height="6.4" fill="#6c6c6c" stroke="#dedede" stroke-width="1"/>
</g>
<g filter="url(#b3)">
<rect x="41.6" y="444.4" width="5.4" height="4.6" fill="none" stroke="#d0d0d0" stroke-width="0.9"/>
<rect x="44.2" y="443.4" width="5.4" height="3.6" fill="#bdbdbd" />
<path d="M68.5 446.175 L70 447.825 L71.5 446.175" fill="none" stroke="#d0d0d0" stroke-width="0.9"/>
<rect x="81" y="445.2" width="2.2" height="2.6" fill="#5e5e5e" />
<rect x="86" y="445.2" width="2.2" height="2.6" fill="#5e5e5e" />
<rect x="91" y="445.2" width="2.2" height="2.6" fill="#5e5e5e" />
<rect x="98.4" y="443.6" width="1" height="5.4" fill="#e0e0e0" />
<path d="M120.1 446.175 L121.6 447.825 L123.1 446.175" fill="none" stroke="#d0d0d0" stroke-width="0.9"/>
<rect x="132" y="445.2" width="2.2" height="2.6" fill="#5e5e5e" />
<rect x="137" y="445.2" width="2.2" height="2.6" fill="#5e5e5e" />
<rect x="142" y="445.2" width="2.2" height="2.6" fill="#5e5e5e" />
<text x="181" y="449.2" textLength="34" lengthAdjust="spacingAndGlyphs" font-size="5.8" fill="#e0e0e0" font-weight="normal" >Direct Selection</text>
<path d="M254.4 444.4 L256.8 446.8 L254.4 449.2 Z" fill="#e0e0e0"/>
<path d="M262.4 444.6 L260.2 446.8 L262.4 449 Z" fill="#9a9a9a"/>
</g>
<g filter="url(#b7)">
<path d="M34.2 67.2 L51.6 53 L63.6 53.8 L52.6 66.3 L87.6 66.3 L87.6 73 L51.6 73 L62.8 81.4 L57.4 85.2 L50 83.6 Z" fill="#fb0f17" stroke="#fb0f17" stroke-width="0.6" stroke-linejoin="round"/>
</g>
</g>
</svg>
</body></html>
